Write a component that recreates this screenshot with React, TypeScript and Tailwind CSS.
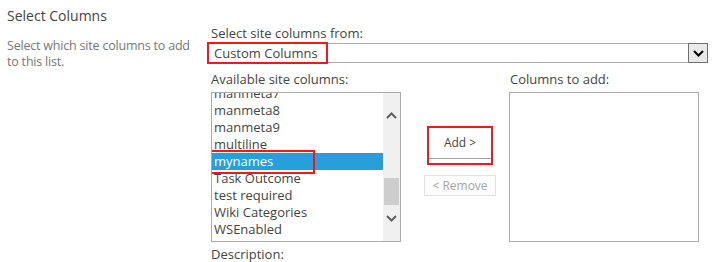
const available = [
  "manmeta7",
  "manmeta8",
  "manmeta9",
  "multiline",
  "mynames",
  "Task Outcome",
  "test required",
  "Wiki Categories",
  "WSEnabled",
];

const selectedName = "mynames";

const Chevron = ({ up, className }: { up?: boolean; className?: string }) => (
  <svg width="11" height="7" viewBox="0 0 11 7" className={className}>
    <path
      d={up ? "M1 6 L5.5 1.5 L10 6" : "M1 1 L5.5 5.5 L10 1"}
      fill="none"
      stroke="currentColor"
      strokeWidth="2"
    />
  </svg>
);

export default function App() {
  return (
    <div className="w-[724px] h-[262px] overflow-hidden bg-white flex font-['Segoe_UI','Open_Sans',sans-serif] text-[13px] text-[#444]">
      {/* left description */}
      <div className="w-[204px] shrink-0 pl-[7px] pt-[7px]">
        <div className="text-[14px] leading-[18px] text-[#444]">Select Columns</div>
        <div className="mt-[13px] text-[12.5px] tracking-[-0.2px] leading-[16px] text-[#777]">
          Select which site columns to add to this list.
        </div>
      </div>

      {/* right side */}
      <div className="flex-1 pt-[25px]">
        <div className="pl-[7px] leading-[17px]">Select site columns from:</div>

        <div className="relative ml-[4px] mt-[1px] w-[500px] h-[20px] border border-[#ababab] flex items-center">
          <div className="flex-1 pl-[5px] leading-[18px]">Custom Columns</div>
          <div className="w-[20px] h-[20px] -mr-px -my-px border border-[#707070] bg-[#e9e9e9] flex items-center justify-center text-black">
            <Chevron />
          </div>
          <div className="absolute left-[-2px] top-[-2px] w-[121px] h-[22px] border-2 border-[#f01818]" />
        </div>

        <div className="ml-[7px] mt-[8px] flex">
          {/* available columns */}
          <div className="w-[190px]">
            <div className="leading-[17px]">Available site columns:</div>
            <div className="mt-[4px] h-[150px] border border-[#ababab] flex">
              <div className="relative w-[171px] overflow-hidden">
                <div className="-mt-[8px]">
                  {available.map((name) => (
                    <div
                      key={name}
                      className={
                        name === selectedName
                          ? "relative h-[17px] leading-[17px] pl-[2px] bg-[#26a0da] text-white"
                          : "h-[17px] leading-[17px] pl-[2px]"
                      }
                    >
                      {name}
                      {name === selectedName && (
                        <div className="absolute left-[-6px] top-[-3px] w-[109px] h-[24px] border-2 border-[#f01818]" />
                      )}
                    </div>
                  ))}
                </div>
              </div>
              <div className="w-[17px] bg-[#f0f0f0] flex flex-col items-center text-[#606060]">
                <Chevron up className="mt-[19px]" />
                <div className="mt-[59px] w-[15px] h-[27px] bg-[#cdcdcd]" />
                <Chevron className="mt-[10px]" />
              </div>
            </div>
            <div className="mt-[4px] leading-[17px]">Description:</div>
          </div>

          {/* buttons */}
          <div className="w-[108px] flex flex-col items-center pl-[10px] pt-[55px]">
            <button className="w-[66px] h-[39px] border-2 border-[#f01818] bg-white flex flex-col">
              <div className="w-full h-[31px] border-b border-[#a0a0a0] flex items-center justify-center text-[12px] text-[#444]">
                Add &gt;
              </div>
            </button>
            <button className="mt-[10px] w-[72px] h-[21px] border border-[#e1e1e1] bg-[#fdfdfd] text-[12px] text-[#a6a6a6] flex items-center justify-center">
              &lt; Remove
            </button>
          </div>

          {/* columns to add */}
          <div className="w-[190px]">
            <div className="pl-[1px] leading-[17px]">Columns to add:</div>
            <div className="mt-[4px] h-[150px] border border-[#ababab]" />
          </div>
        </div>
      </div>
    </div>
  );
}
